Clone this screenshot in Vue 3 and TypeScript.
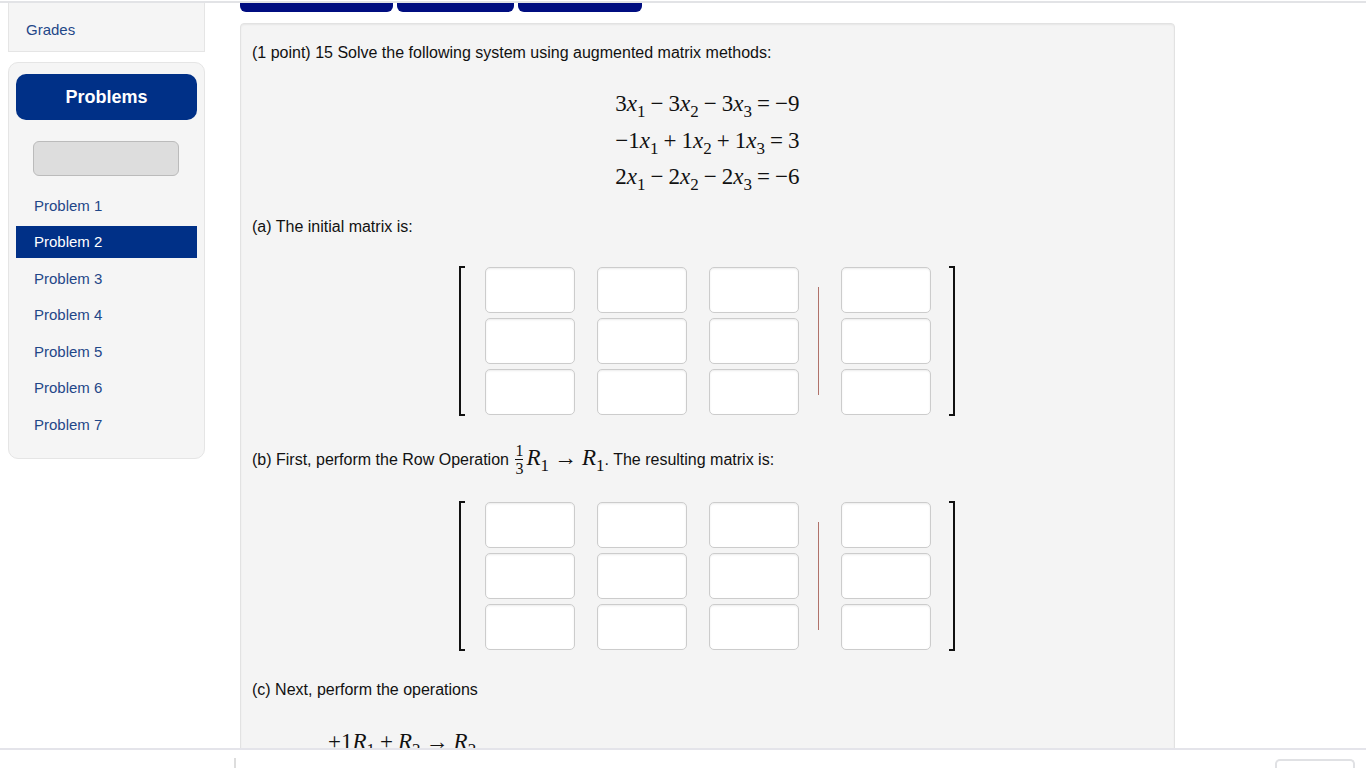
<script setup lang="ts">
type Tok = { t: string; k: 'n' | 'v' | 'o' | 's' }

const parse = (source: string): Tok[] =>
  source.split(' ').map((part) => {
    const kind = part[0] as Tok['k']
    return { k: kind, t: part.slice(1) }
  })

const tags = { n: 'span', v: 'i', o: 'span', s: 'sub' } as const

const system: Tok[][] = [
  parse('n3 vx s1 o− n3 vx s2 o− n3 vx s3 o= n−9'),
  parse('n−1 vx s1 o+ n1 vx s2 o+ n1 vx s3 o= n3'),
  parse('n2 vx s1 o− n2 vx s2 o− n2 vx s3 o= n−6'),
]
const rowOp: Tok[] = parse('vR s1 o→ vR s1')
const nextOp: Tok[] = parse('n+1 vR s1 o+ vR s2 o→ vR s2')

const problems = [1, 2, 3, 4, 5, 6, 7]
const current = 2
</script>

<template>
  <div class="page">
    <div class="topline"></div>
    <div class="view">
      <aside class="side">
        <nav class="box menu"><a href="#grades">Grades</a></nav>
        <nav class="box problems" aria-label="Problems">
          <h2>Problems</h2>
          <button class="progress" type="button" aria-label="Progress"></button>
          <ul>
            <li v-for="n in problems" :key="n">
              <a :href="'#problem-' + n" :class="{ active: n === current }">Problem {{ n }}</a>
            </li>
          </ul>
        </nav>
      </aside>
      <main class="main">
        <div class="tabs">
          <button class="tab first" type="button" aria-label="Previous Problem"></button>
          <button class="tab second" type="button" aria-label="Problem List"></button>
          <button class="tab third" type="button" aria-label="Next Problem"></button>
        </div>
        <section class="panel">
          <p>(1 point) 15 Solve the following system using augmented matrix methods:</p>
          <div class="system">
            <div v-for="(line, i) in system" :key="i" class="math">
              <component :is="tags[tok.k]" v-for="(tok, j) in line" :key="j" :class="tok.k">{{ tok.t }}</component>
            </div>
          </div>
          <p>(a) The initial matrix is:</p>
          <template v-for="m in ['a', 'b']" :key="m">
            <p v-if="m === 'b'" class="rowop">
              (b) First, perform the Row Operation
              <span class="math"><span class="frac"><span>1</span><span>3</span></span><component :is="tags[tok.k]" v-for="(tok, j) in rowOp" :key="j" :class="tok.k">{{ tok.t }}</component></span>. The resulting matrix is:
            </p>
            <div class="matrix">
              <span class="bracket left"></span>
              <div class="cells">
                <input v-for="c in 9" :key="c" type="text" :aria-label="`Matrix ${m} row ${Math.ceil(c / 3)} column ${((c - 1) % 3) + 1}`" />
              </div>
              <span class="bar"></span>
              <div class="cells single">
                <input v-for="c in 3" :key="c" type="text" :aria-label="`Matrix ${m} row ${c} constant`" />
              </div>
              <span class="bracket right"></span>
            </div>
          </template>
          <p class="next">(c) Next, perform the operations</p>
          <div class="math operation">
            <component :is="tags[tok.k]" v-for="(tok, j) in nextOp" :key="j" :class="tok.k">{{ tok.t }}</component>
          </div>
        </section>
      </main>
    </div>
    <footer class="shelf">
      <span class="divider"></span>
      <button type="button" aria-label="Show all"></button>
    </footer>
  </div>
</template>

<style>
body {
  margin: 0;
  background: #fff;
}
</style>

<style scoped>
* {
  box-sizing: border-box;
}
.page {
  height: 100vh;
  display: flex;
  flex-direction: column;
  overflow: hidden;
  font-family: "Liberation Sans", Arial, sans-serif;
  font-size: 16px;
  line-height: 24px;
  color: #111;
}
.topline {
  flex: none;
  height: 3px;
  border-bottom: 2px solid #e2e3e6;
}
.view {
  flex: 1;
  min-height: 0;
  overflow: hidden;
  display: grid;
  grid-template-columns: 197px minmax(0, 1fr);
  column-gap: 35px;
  align-items: start;
  padding: 0 14% 0 8px;
}
.box {
  background: #f5f5f5;
  border: 1px solid #e5e5e5;
}
.menu {
  height: 49px;
  border-top: 0;
  padding: 15px 17px 0;
}
.side a {
  color: #1f4788;
  font-size: 15px;
  text-decoration: none;
}
.problems {
  margin-top: 10px;
  padding: 11px 7px 15px;
  border-radius: 10px;
}
h2 {
  margin: 0;
  border-radius: 10px;
  background: #003087;
  color: #fff;
  font-size: 18px;
  line-height: 46px;
  text-align: center;
}
.progress {
  display: block;
  width: 146px;
  height: 35px;
  margin: 21px 17px 12px;
  border: 1px solid #bbb;
  border-radius: 6px;
  background: #ddd;
}
ul {
  margin: 0;
  padding: 0;
  list-style: none;
}
li {
  padding: 2px 0;
}
li:nth-child(2n) {
  padding-bottom: 3px;
}
.side li a {
  display: block;
  padding-left: 18px;
  line-height: 32px;
}
.side li a.active {
  background: #003087;
  color: #fff;
}
.tabs {
  display: flex;
  gap: 4px;
  height: 9px;
}
.tab {
  border: 0;
  padding: 0;
  background: #000d80;
  border-radius: 0 0 6px 6px;
}
.first {
  width: 153px;
}
.second {
  width: 117px;
}
.third {
  width: 124px;
}
.panel {
  margin-top: 11px;
  padding: 17px 11px;
  background: #f4f4f4;
  border: 1px solid #e2e2e2;
  border-radius: 4px;
  box-shadow: inset 0 1px 2px rgba(0, 0, 0, 0.06);
}
p {
  margin: 0;
}
.math {
  font-family: "Liberation Serif", "Times New Roman", serif;
  font-size: 23px;
  line-height: 36px;
  white-space: nowrap;
}
.math sub {
  font-size: 17px;
  line-height: 0;
  vertical-align: -6px;
}
.o {
  padding: 0 5px;
}
.system {
  width: fit-content;
  margin: 21px auto;
  text-align: right;
}
.system .math:nth-child(2) {
  line-height: 38px;
}
.system .math:nth-child(3) {
  line-height: 34px;
}
.matrix {
  display: flex;
  align-items: center;
  justify-content: center;
  margin: 27px 0 24px;
}
.rowop {
  height: 36px;
  line-height: 36px;
}
.rowop + .matrix {
  margin: 25px 0 27px;
}
.frac {
  display: inline-flex;
  flex-direction: column;
  vertical-align: middle;
  margin: 0 3px 0 2px;
  font-size: 16px;
  line-height: 17px;
  text-align: center;
}
.frac span:first-child {
  border-bottom: 1px solid #111;
}
.cells {
  display: grid;
  grid-template-columns: repeat(3, 90px);
  gap: 5px 22px;
}
.single {
  grid-template-columns: 90px;
}
.cells input {
  width: 90px;
  height: 46px;
  padding: 4px 8px;
  font: inherit;
  background: #fff;
  border: 1px solid #ccc;
  border-radius: 5px;
  box-shadow: inset 0 1px 2px rgba(0, 0, 0, 0.08);
}
.bracket {
  width: 6px;
  height: 150px;
  border: 2px solid #111;
}
.left {
  border-right: 0;
  margin-right: 20px;
}
.right {
  border-left: 0;
  margin-left: 18px;
}
.bar {
  width: 1px;
  height: 108px;
  margin: 0 22px 0 19px;
  background: #b0726a;
}
.operation {
  margin: 22px 0 0 76px;
}
.shelf {
  flex: none;
  height: 20px;
  border-top: 2px solid #e4e4ea;
  display: flex;
  justify-content: space-between;
  align-items: flex-end;
  overflow: hidden;
  padding: 0 11px 0 234px;
}
.divider {
  width: 2px;
  height: 10px;
  background: #ddd;
}
.shelf button {
  width: 80px;
  height: 9px;
  padding: 0;
  background: #fff;
  border: 2px solid #e0e1e4;
  border-bottom: 0;
  border-radius: 5px 5px 0 0;
}
</style>
